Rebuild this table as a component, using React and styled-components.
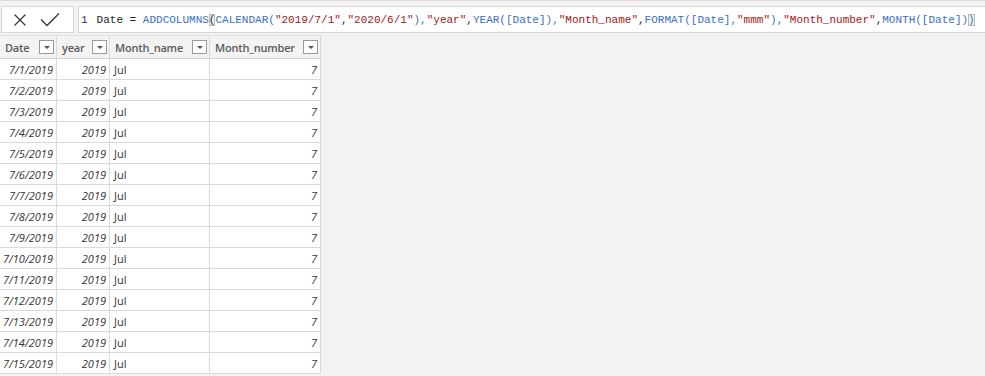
import React from "react";
import styled, { createGlobalStyle } from "styled-components";

const Global = createGlobalStyle`
  html, body { margin: 0; padding: 0; background: #f3f2f1; }
  body { width: 985px; height: 376px; overflow: hidden; }
`;

const Page = styled.div`
  width: 985px;
  height: 376px;
  background: #f3f2f1;
  display: flex;
  flex-direction: column;
  overflow: hidden;
  border-top: 1px solid #dcdcdc;
  box-sizing: border-box;
`;

const FormulaRow = styled.div`
  display: flex;
  gap: 4px;
  padding: 5px 0 0 1px;
  height: 28px;
`;

const ButtonBox = styled.div`
  width: 73px;
  height: 27px;
  box-sizing: border-box;
  background: #fff;
  border: 1px solid #d6d6d6;
  display: flex;
  align-items: center;
  justify-content: center;
  gap: 13px;
  padding-right: 3px;
`;

const Editor = styled.div`
  flex: 1;
  height: 27px;
  box-sizing: border-box;
  background: #fff;
  border: 1px solid #d6d6d6;
  border-right: none;
  display: flex;
  align-items: center;
  padding-left: 2px;
  font-family: "Liberation Mono", "DejaVu Sans Mono", monospace;
  font-size: 11px;
  white-space: pre;
  color: #1e1e1e;
`;

const LineNo = styled.span`
  color: #2b2b6b;
  margin-right: 9px;
`;

const Tok = styled.span`
  color: ${(p) => (p.$k === "f" ? "#3a6fbf" : p.$k === "s" ? "#a31515" : "#1e1e1e")};
  ${(p) => p.$match && `outline: 1px solid #b9b9b9; background: #eef3ec; outline-offset: -1px;`}
`;

const Table = styled.div`
  margin-top: 1px;
  display: grid;
  grid-template-columns: 57px 53px 100px 111px;
  width: 321px;
  font-family: "Open Sans", "Noto Sans", sans-serif;
  font-size: 11px;
  border-top: 1px solid #e0e0e0;
`;

const HeadCell = styled.div`
  height: 22px;
  background: #f3f3f3;
  border-right: 1px solid #d9d9d9;
  border-bottom: 1px solid #d0d0d0;
  display: flex;
  align-items: center;
  justify-content: space-between;
  padding: 0 2px 0 5px;
  font-weight: 600;
  letter-spacing: -0.2px;
  color: #5a5a5a;
`;

const Drop = styled.span`
  width: 15px;
  height: 14px;
  box-sizing: border-box;
  border: 1px solid #9a9a9a;
  background: #fff;
  display: flex;
  align-items: center;
  justify-content: center;
  &::after {
    content: "";
    border-left: 3px solid transparent;
    border-right: 3px solid transparent;
    border-top: 3px solid #555;
  }
`;

const Cell = styled.div`
  height: 20px;
  background: #fff;
  border-right: 1px solid #dadada;
  border-bottom: 1px solid #dadada;
  display: flex;
  align-items: center;
  justify-content: ${(p) => (p.$right ? "flex-end" : "flex-start")};
  padding: 0 3px 0 4px;
  font-style: ${(p) => (p.$italic ? "italic" : "normal")};
  color: #333;
`;

const XIcon = () => (
  <svg width="14" height="14" viewBox="0 0 14 14">
    <path d="M1.5 1.5 L12.5 12.5 M12.5 1.5 L1.5 12.5" stroke="#333" strokeWidth="1.2" fill="none" />
  </svg>
);

const CheckIcon = () => (
  <svg width="20" height="15" viewBox="0 0 20 15">
    <path d="M1 7.5 L7 13.5 L19 1.5" stroke="#333" strokeWidth="1.3" fill="none" />
  </svg>
);

const tokens = [
  ["Date = ", ""],
  ["ADDCOLUMNS", "f"],
  ["(", "", true],
  ["CALENDAR(", "f"],
  ['"2019/7/1"', "s"],
  [",", ""],
  ['"2020/6/1"', "s"],
  ["),", "f"],
  ['"year"', "s"],
  [",", ""],
  ["YEAR([Date]),", "f"],
  ['"Month_name"', "s"],
  [",", ""],
  ["FORMAT([Date],", "f"],
  ['"mmm"', "s"],
  ["),", "f"],
  ['"Month_number"', "s"],
  [",", ""],
  ["MONTH([Date])", "f"],
  [")", "f", true],
];

const headers = ["Date", "year", "Month_name", "Month_number"];
const rows = Array.from({ length: 15 }, (_, i) => `7/${i + 1}/2019`);

export default function App() {
  return (
    <Page>
      <Global />
      <FormulaRow>
        <ButtonBox>
          <XIcon />
          <CheckIcon />
        </ButtonBox>
        <Editor>
          <LineNo>1</LineNo>
          {tokens.map(([t, k, m], i) => (
            <Tok key={i} $k={k} $match={m}>{t}</Tok>
          ))}
        </Editor>
      </FormulaRow>
      <Table>
        {headers.map((h) => (
          <HeadCell key={h}>
            {h}
            <Drop />
          </HeadCell>
        ))}
        {rows.map((d) => (
          <React.Fragment key={d}>
            <Cell $right $italic>{d}</Cell>
            <Cell $right $italic>2019</Cell>
            <Cell>Jul</Cell>
            <Cell $right $italic>7</Cell>
          </React.Fragment>
        ))}
      </Table>
    </Page>
  );
}
